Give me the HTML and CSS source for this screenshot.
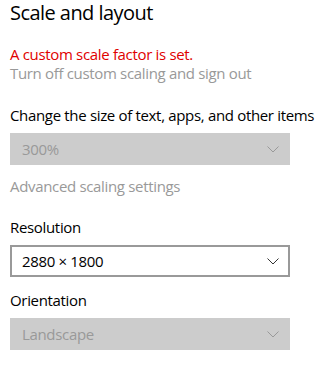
FILE: index.html
```html
<!DOCTYPE html>
<html lang="en">
  <head>
    <meta charset="UTF-8" />
    <meta name="viewport" content="width=device-width, initial-scale=1.0" />
    <title>Scale and layout</title>
    <link rel="stylesheet" href="styles.css">
  </head>
  <body>
    <h1>Scale and layout</h1>

    <div class="notice">
      <p class="warning">A custom scale factor is set.</p>
      <a class="link disabled">Turn off custom scaling and sign out</a>
    </div>

    <div class="field">
      <label>Change the size of text, apps, and other items</label>
      <div class="select disabled">
        <span>300%</span>
        <svg class="chevron" width="12" height="7" viewBox="0 0 12 7">
          <polyline points="0.5,0.5 6,6 11.5,0.5" />
        </svg>
      </div>
      <a class="link disabled advanced">Advanced scaling settings</a>
    </div>

    <div class="field resolution">
      <label>Resolution</label>
      <div class="select">
        <span>2880 × 1800</span>
        <svg class="chevron" width="12" height="7" viewBox="0 0 12 7">
          <polyline points="0.5,0.5 6,6 11.5,0.5" />
        </svg>
      </div>
    </div>

    <div class="field orientation">
      <label>Orientation</label>
      <div class="select disabled">
        <span>Landscape</span>
        <svg class="chevron" width="12" height="7" viewBox="0 0 12 7">
          <polyline points="0.5,0.5 6,6 11.5,0.5" />
        </svg>
      </div>
    </div>
  </body>
</html>
```

FILE: styles.css
```css
body {
  font-family: "Open Sans", "Noto Sans", sans-serif;
  font-size: 15px;
  line-height: 20px;
  letter-spacing: -0.33px;
  margin: 0;
  padding: 0 10px;
  color: #000;
  background-color: #fff;
}
h1 {
  font-size: 20px;
  font-weight: normal;
  line-height: 26px;
  letter-spacing: -0.55px;
  margin: 0;
}
.notice {
  margin-top: 20px;
}
.warning {
  margin: 0;
  line-height: 17px;
  color: #e00000;
}
.link {
  display: block;
  color: #999;
}
.field {
  margin-top: 22px;
}
.resolution {
  margin-top: 21px;
}
.orientation {
  margin-top: 13px;
}
label {
  display: block;
  margin-bottom: 8px;
  white-space: nowrap;
}
.select {
  box-sizing: border-box;
  width: 280px;
  height: 32px;
  display: flex;
  align-items: center;
  justify-content: space-between;
  padding: 0 9px 0 10px;
  border: 2px solid #999;
  background-color: #fff;
}
.select.disabled {
  border-color: #ccc;
  background-color: #ccc;
  color: #999;
}
.chevron {
  fill: none;
  stroke: #333;
  stroke-width: 1;
}
.disabled .chevron {
  stroke: #999;
}
.advanced {
  margin-top: 11px;
}
```
